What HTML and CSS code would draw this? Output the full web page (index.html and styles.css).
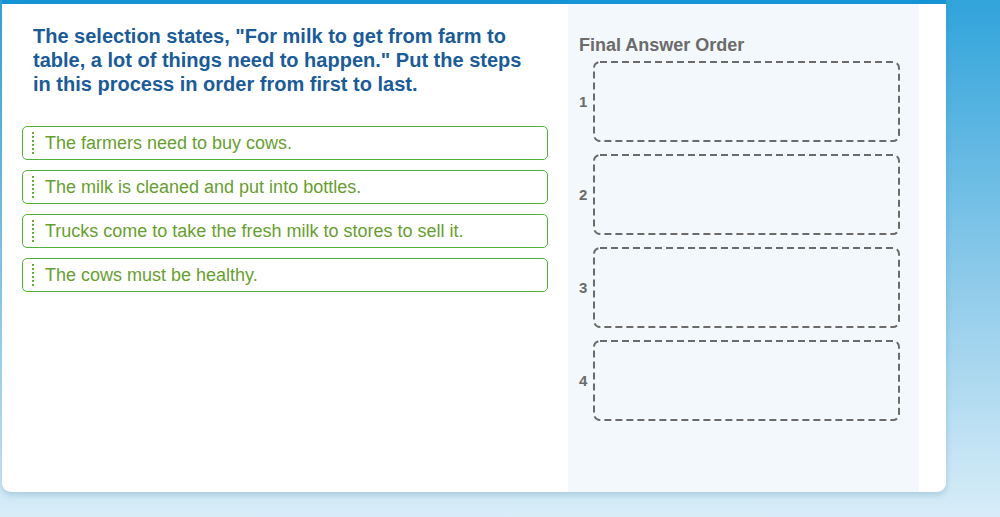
FILE: index.html
```html
<!DOCTYPE html>
<html>
<head>
<meta charset="utf-8">
<link rel="stylesheet" href="styles.css">
</head>
<body>
<div class="card">
  <div class="left">
    <h1 class="prompt">The selection states, "For milk to get from farm to table, a lot of things need to happen." Put the steps in this process in order from first to last.</h1>
    <ul class="items">
      <li class="item"><span class="handle"></span><span class="label">The farmers need to buy cows.</span></li>
      <li class="item"><span class="handle"></span><span class="label">The milk is cleaned and put into bottles.</span></li>
      <li class="item"><span class="handle"></span><span class="label">Trucks come to take the fresh milk to stores to sell it.</span></li>
      <li class="item"><span class="handle"></span><span class="label">The cows must be healthy.</span></li>
    </ul>
  </div>
  <div class="right">
    <h2 class="order-title">Final Answer Order</h2>
    <ol class="slots">
      <li class="slot"><span class="num">1</span><div class="drop"><svg class="dash" viewBox="0 0 307 81" preserveAspectRatio="none"><rect x="1" y="1" width="305" height="79" rx="6" ry="6"/></svg></div></li>
      <li class="slot"><span class="num">2</span><div class="drop"><svg class="dash" viewBox="0 0 307 81" preserveAspectRatio="none"><rect x="1" y="1" width="305" height="79" rx="6" ry="6"/></svg></div></li>
      <li class="slot"><span class="num">3</span><div class="drop"><svg class="dash" viewBox="0 0 307 81" preserveAspectRatio="none"><rect x="1" y="1" width="305" height="79" rx="6" ry="6"/></svg></div></li>
      <li class="slot"><span class="num">4</span><div class="drop"><svg class="dash" viewBox="0 0 307 81" preserveAspectRatio="none"><rect x="1" y="1" width="305" height="79" rx="6" ry="6"/></svg></div></li>
    </ol>
  </div>
</div>
</body>
</html>
```
FILE: styles.css
```css
html, body {
  margin: 0;
  padding: 0;
  height: 100%;
}
body {
  background: linear-gradient(to bottom, #31a4db 0%, #8fcbea 55%, #d8edf8 100%);
  font-family: Arial, "Liberation Sans", sans-serif;
  overflow: hidden;
}
.card {
  margin-left: 2px;
  width: 944px;
  height: 488px;
  background: #fff;
  border-top: 4px solid #1494d4;
  border-radius: 0 0 9px 9px;
  box-shadow: 0 3px 6px rgba(60, 120, 160, 0.25);
  display: flex;
}
.left {
  width: 566px;
  padding: 0 20px;
  box-sizing: border-box;
}
.prompt {
  margin: 20px 0 0 11px;
  font-size: 20px;
  line-height: 24px;
  font-weight: bold;
  color: #1a5b98;
  width: 495px;
}
.items {
  list-style: none;
  margin: 30px 0 0;
  padding: 0;
  display: flex;
  flex-direction: column;
  gap: 10px;
}
.item {
  height: 34px;
  box-sizing: border-box;
  border: 1px solid #4fb236;
  border-radius: 5px;
  display: flex;
  align-items: center;
  padding-left: 9px;
}
.handle {
  width: 0;
  height: 22px;
  border-left: 2px dotted #5fae3a;
  margin-right: 11px;
}
.label {
  font-size: 18px;
  color: #679e30;
}
.right {
  width: 351px;
  background: #f3f8fc;
  padding: 0 19px 0 11px;
  box-sizing: border-box;
}
.order-title {
  margin: 31px 0 0;
  font-size: 18px;
  line-height: 20px;
  font-weight: bold;
  color: #6b6b6b;
}
.slots {
  list-style: none;
  margin: 6px 0 0;
  padding: 0;
  display: flex;
  flex-direction: column;
  gap: 12px;
}
.slot {
  display: flex;
  align-items: center;
}
.num {
  width: 14px;
  font-size: 15px;
  font-weight: bold;
  color: #6b6b6b;
}
.drop {
  flex: 1;
  height: 81px;
}
.dash {
  display: block;
  width: 100%;
  height: 100%;
  overflow: visible;
}
.dash rect {
  fill: none;
  stroke: #6b6b6b;
  stroke-width: 2;
  stroke-dasharray: 7 4;
}
```
